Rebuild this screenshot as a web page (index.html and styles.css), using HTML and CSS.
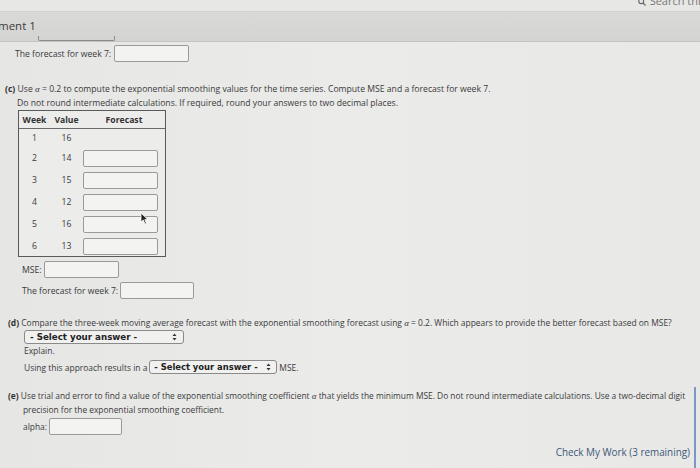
FILE: index.html
```html
<!DOCTYPE html>
<html>
<head>
<meta charset="utf-8">
<link rel="stylesheet" href="styles.css">
</head>
<body>
<div class="page">
  <div class="topbar">
    <div class="search">
      <svg class="search-icon" width="8" height="8" viewBox="0 0 8 8"><circle cx="3.2" cy="3.2" r="2.4" fill="none" stroke="#666" stroke-width="1.1"/><line x1="5" y1="5" x2="7.5" y2="7.5" stroke="#666" stroke-width="1.2"/></svg>
      <span class="search-text">Search this</span>
    </div>
  </div>
  <div class="header">
    <span class="title">ment 1</span>
    <div class="stub"></div>
  </div>

  <div class="content">
    <div class="row first-row">
      <span>The forecast for week 7:</span>
      <div class="input w75"></div>
    </div>

    <div class="part part-c">
      <p class="line"><b>(c)</b> Use <i class="alpha">α</i> = 0.2 to compute the exponential smoothing values for the time series. Compute MSE and a forecast for week 7.</p>
      <p class="line indent">Do not round intermediate calculations. If required, round your answers to two decimal places.</p>

      <div class="table">
        <div class="thead">
          <span>Week</span><span>Value</span><span>Forecast</span>
        </div>
        <div class="tr tr-first"><span>1</span><span>16</span><span></span></div>
        <div class="tr"><span>2</span><span>14</span><span class="cell"><div class="input w75"></div></span></div>
        <div class="tr"><span>3</span><span>15</span><span class="cell"><div class="input w75"></div></span></div>
        <div class="tr"><span>4</span><span>12</span><span class="cell"><div class="input w75"></div></span></div>
        <div class="tr"><span>5</span><span>16</span><span class="cell"><div class="input w75"></div></span></div>
        <div class="tr"><span>6</span><span>13</span><span class="cell"><div class="input w75"></div></span></div>
        <svg class="cursor" width="9" height="13" viewBox="0 0 9 13"><path d="M1 1 L1 10 L3.3 8 L5 12 L6.4 11.4 L4.8 7.6 L7.8 7.6 Z" fill="#222" stroke="#fff" stroke-width="0.8"/></svg>
      </div>

      <div class="row mse-row">
        <span>MSE:</span>
        <div class="input w75"></div>
      </div>
      <div class="row week-row">
        <span>The forecast for week 7:</span>
        <div class="input w74"></div>
      </div>
    </div>

    <div class="part part-d">
      <p class="line"><b>(d)</b> Compare the three-week moving average forecast with the exponential smoothing forecast using <i class="alpha">α</i> = 0.2. Which appears to provide the better forecast based on MSE?</p>
      <div class="select s1"><span>- Select your answer -</span>
        <svg width="5" height="8" viewBox="0 0 5 8"><path d="M2.5 0.5 L4.5 3 L0.5 3 Z M0.5 5 L4.5 5 L2.5 7.5 Z" fill="#333"/></svg>
      </div>
      <p class="line sub">Explain.</p>
      <div class="row using-row">
        <span>Using this approach results in a</span>
        <div class="select s2"><span>- Select your answer -</span>
          <svg width="5" height="8" viewBox="0 0 5 8"><path d="M2.5 0.5 L4.5 3 L0.5 3 Z M0.5 5 L4.5 5 L2.5 7.5 Z" fill="#333"/></svg>
        </div>
        <span>MSE.</span>
      </div>
    </div>

    <div class="part part-e">
      <p class="line"><b>(e)</b> Use trial and error to find a value of the exponential smoothing coefficient <i class="alpha">α</i> that yields the minimum MSE. Do not round intermediate calculations. Use a two-decimal digit</p>
      <p class="line indent2">precision for the exponential smoothing coefficient.</p>
      <div class="row alpha-row">
        <span>alpha:</span>
        <div class="input w73"></div>
      </div>
      <div class="check">Check My Work (3 remaining)</div>
    </div>
  </div>
</div>
</body>
</html>
```

FILE: styles.css
```css
* { box-sizing: border-box; }
html, body { margin: 0; padding: 0; }
body {
  width: 700px;
  height: 468px;
  overflow: hidden;
  background: #e9e9e8;
  font-family: "Open Sans", "Liberation Sans", sans-serif;
  font-size: 8.65px;
  color: #3a3a3a;
}
.page {
  width: 700px;
  height: 468px;
  position: relative;
  background: linear-gradient(90deg, #e6e6e5 0%, #ebebea 50%, #e8e8e7 100%);
}
p { margin: 0; }

.topbar {
  height: 12px;
  background: #e7e7e6;
  border-bottom: 1px solid #d2d2d2;
  overflow: hidden;
  display: flex;
  justify-content: flex-end;
}
.search {
  display: flex;
  align-items: flex-start;
  gap: 4px;
  margin-top: -5px;
  margin-right: -6px;
}
.search-icon { margin-top: 3px; }
.search-text {
  font-size: 11px;
  line-height: 12px;
  color: #777;
}

.header {
  height: 30px;
  background: linear-gradient(180deg, #d9d9d8 0%, #d4d4d3 100%);
  border-bottom: 1px solid #c4c4c4;
  position: relative;
  padding-top: 7px;
}
.title {
  display: block;
  margin-left: -2px;
  font-size: 11.5px;
  line-height: 14px;
  color: #3a3a3a;
}
.stub {
  position: absolute;
  left: 38px;
  top: 24px;
  width: 77px;
  height: 5px;
  border: 1px solid #8a8a8a;
  border-top: none;
  border-radius: 0 0 2px 2px;
}

.content { display: flex; flex-direction: column; }

.row {
  display: flex;
  align-items: center;
  gap: 3px;
  height: 17px;
}
.first-row { margin-top: 3px; margin-left: 15px; }

.input {
  height: 17px;
  background: #f3f3f2;
  border: 1px solid #9a9a9a;
  border-radius: 2px;
}
.w75 { width: 75px; }
.w74 { width: 74px; }
.w73 { width: 73px; }

.line { line-height: 14px; white-space: nowrap; }
.line b { font-weight: 700; color: #333; }
.alpha { font-family: "Liberation Serif", serif; font-size: 9px; }

.part-c { margin-top: 20px; padding-left: 5px; display: flex; flex-direction: column; }
.part-c .indent { padding-left: 12px; }

.table {
  position: relative;
  margin-left: 13px;
  width: 148px;
  height: 147px;
  border: 1px solid #5a5a5a;
  background: #ececeb;
}
.thead, .tr {
  display: grid;
  grid-template-columns: 31px 33px 82px;
  align-items: center;
  text-align: center;
}
.thead {
  height: 18px;
  font-weight: 700;
  color: #333;
  border-bottom: 1px solid #6a6a6a;
}
.tr { height: 22px; }
.tr-first { height: 18px; }
.cell { display: flex; justify-content: flex-start; }
.cursor { position: absolute; left: 121px; top: 101px; }

.mse-row { margin-top: 4px; margin-left: 17px; gap: 2px; }
.week-row { margin-top: 4px; margin-left: 17px; gap: 2px; }

.part-d {
  margin-top: 17px;
  padding-left: 8px;
  display: flex;
  flex-direction: column;
  font-size: 8.45px;
}
.select {
  display: flex;
  align-items: center;
  justify-content: space-between;
  height: 14px;
  padding: 0 6px 0 5px;
  background: #f1f1f0;
  border: 1px solid #8a8a8a;
  border-radius: 3px;
  font-family: "DejaVu Sans", Verdana, sans-serif;
  font-weight: 700;
  font-size: 8.7px;
  color: #222;
}
.s1 { width: 160px; margin-left: 16px; }
.s2 { width: 128px; padding-left: 4px; padding-right: 5px; font-size: 8.4px; }
.sub { margin-left: 16px; }
.using-row { margin-left: 16px; margin-top: 2px; height: 14px; gap: 2px; }

.part-e {
  margin-top: 13px;
  padding-left: 8px;
  display: flex;
  flex-direction: column;
  margin-right: 4px;
  border-right: 2px solid #7b98c4;
  padding-top: 2px;
  height: 88px;
  font-size: 8.4px;
}
.part-e .indent2 { padding-left: 15px; }
.alpha-row { margin-left: 15px; margin-top: 1px; gap: 2px; }
.check {
  align-self: flex-end;
  margin-top: 10px;
  margin-right: 4px;
  line-height: 14px;
  font-size: 9.9px;
  color: #3c5878;
}
```
